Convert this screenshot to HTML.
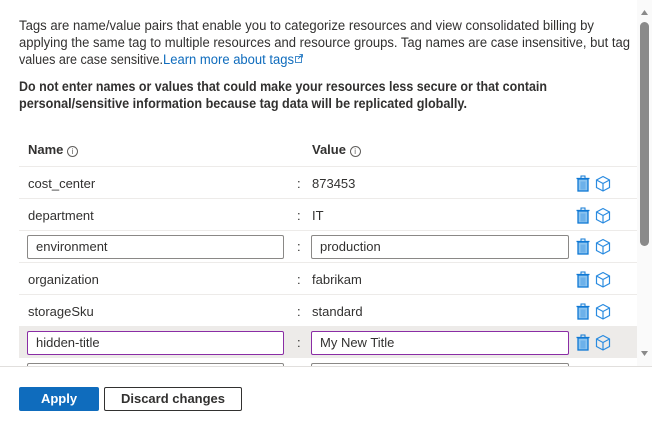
<!DOCTYPE html>
<html><head><style>
*{box-sizing:border-box;margin:0;padding:0}
body{width:662px;height:421px;overflow:hidden;background:#fff;font-family:"Liberation Sans",sans-serif;color:#323130;position:relative}
.t{position:absolute;font-size:13px}
.line{position:absolute;left:19px;width:618px;height:1px;background:#edebe9}
.in{position:absolute;height:24px;border:1px solid #8a8886;border-radius:2px;font-size:13px;line-height:22px;padding-left:8px;background:#fff}
</style></head><body>
<svg style="position:absolute;left:0;top:0" width="662" height="120" font-family="Liberation Sans, sans-serif" font-size="13.5" fill="#323130">
<text x="19" y="30" textLength="575" lengthAdjust="spacingAndGlyphs">Tags are name/value pairs that enable you to categorize resources and view consolidated billing by</text>
<text x="19" y="47" textLength="611" lengthAdjust="spacingAndGlyphs">applying the same tag to multiple resources and resource groups. Tag names are case insensitive, but tag</text>
<text x="19" y="64" textLength="144" lengthAdjust="spacingAndGlyphs">values are case sensitive.</text>
<text x="163" y="64" textLength="131" lengthAdjust="spacingAndGlyphs" fill="#0f6cbd">Learn more about tags</text>
<path d="M295.5 56.5h6v6h-6z M298 59l4-4 M299.5 54.5h3v3" fill="none" stroke="#0f6cbd" stroke-width="0.8"/>
<text x="19" y="91" textLength="528" lengthAdjust="spacingAndGlyphs" font-weight="bold" font-size="13.5">Do not enter names or values that could make your resources less secure or that contain</text>
<text x="19" y="108" textLength="448" lengthAdjust="spacingAndGlyphs" font-weight="bold" font-size="13.5">personal/sensitive information because tag data will be replicated globally.</text>
</svg>
<div class="t" style="left:28px;top:142px;font-weight:bold">Name <span style="font-weight:normal;color:#605e5c;border:1px solid #605e5c;border-radius:50%;display:inline-block;width:11px;height:11px;line-height:9px;text-align:center;font-size:8px">i</span></div>
<div class="t" style="left:312px;top:142px;font-weight:bold">Value <span style="font-weight:normal;color:#605e5c;border:1px solid #605e5c;border-radius:50%;display:inline-block;width:11px;height:11px;line-height:9px;text-align:center;font-size:8px">i</span></div>
<div class="line" style="top:166px"></div>
<div style="position:absolute;left:19px;top:326px;width:618px;height:32px;background:#edebe9"></div>
<div class="t" style="left:28px;top:176px">cost_center</div><div class="t" style="left:297px;top:176px">:</div><div class="t" style="left:312px;top:176px">873453</div>
<div class="line" style="top:198px"></div>
<div class="t" style="left:28px;top:208px">department</div><div class="t" style="left:297px;top:208px">:</div><div class="t" style="left:312px;top:208px">IT</div>
<div class="line" style="top:230px"></div>
<div class="in" style="left:27px;top:235px;width:257px">environment</div><div class="t" style="left:297px;top:239px">:</div><div class="in" style="left:311px;top:235px;width:258px">production</div>
<div class="line" style="top:262px"></div>
<div class="t" style="left:28px;top:272px">organization</div><div class="t" style="left:297px;top:272px">:</div><div class="t" style="left:312px;top:272px">fabrikam</div>
<div class="line" style="top:294px"></div>
<div class="t" style="left:28px;top:304px">storageSku</div><div class="t" style="left:297px;top:304px">:</div><div class="t" style="left:312px;top:304px">standard</div>
<div class="in" style="left:27px;top:331px;width:257px;border-color:#8a2da5">hidden-title</div><div class="t" style="left:297px;top:335px">:</div><div class="in" style="left:311px;top:331px;width:258px;border-color:#8a2da5">My New Title</div>
<div class="in" style="left:27px;top:363px;width:257px"></div><div class="in" style="left:311px;top:363px;width:258px"></div>
<div style="position:absolute;left:0;top:366px;width:652px;height:55px;background:#fff;border-top:1px solid #e1dfdd"></div>
<svg style="position:absolute;left:0;top:0" width="662" height="366">
<defs><g id="ic"><rect x="2" y="4" width="10" height="12" fill="#8cc4ef" stroke="#0f78d4" stroke-width="1.3"/><rect x="4.5" y="6.5" width="5" height="8" fill="#6cb1ea"/><line x1="0.5" y1="3.5" x2="13.5" y2="3.5" stroke="#0f78d4" stroke-width="1.3"/><rect x="5" y="1" width="4" height="2.5" fill="none" stroke="#0f78d4"/>
<path d="M27 1.5 L33.5 5 L33.5 12.5 L27 16 L20.5 12.5 L20.5 5 Z M20.5 5 L27 8.5 L33.5 5 M27 8.5 L27 16" fill="none" stroke="#2a8be0" stroke-width="1.2"/></g></defs>
<use href="#ic" x="576" y="175"/><use href="#ic" x="576" y="207"/><use href="#ic" x="576" y="238"/><use href="#ic" x="576" y="271"/><use href="#ic" x="576" y="303"/><use href="#ic" x="576" y="334"/>
<rect x="637" y="0" width="15" height="366" fill="#fafafa"/>
<path d="M641 15 L648 15 L644.5 10 Z" fill="#8a8a8a"/>
<rect x="640" y="22" width="9" height="224" rx="4.5" fill="#8a8a8a"/>
<path d="M641 351 L648 351 L644.5 356 Z" fill="#8a8a8a"/>
</svg>
<div style="position:absolute;left:19px;top:387px;width:80px;height:24px;background:#0f6cbd;border-radius:2px;color:#fff;font-weight:bold;font-size:13px;text-align:center;line-height:24px">Apply</div>
<div style="position:absolute;left:104px;top:387px;width:138px;height:24px;border:1px solid #323130;border-radius:2px;font-weight:bold;font-size:13px;text-align:center;line-height:22px">Discard changes</div>
</body></html>
